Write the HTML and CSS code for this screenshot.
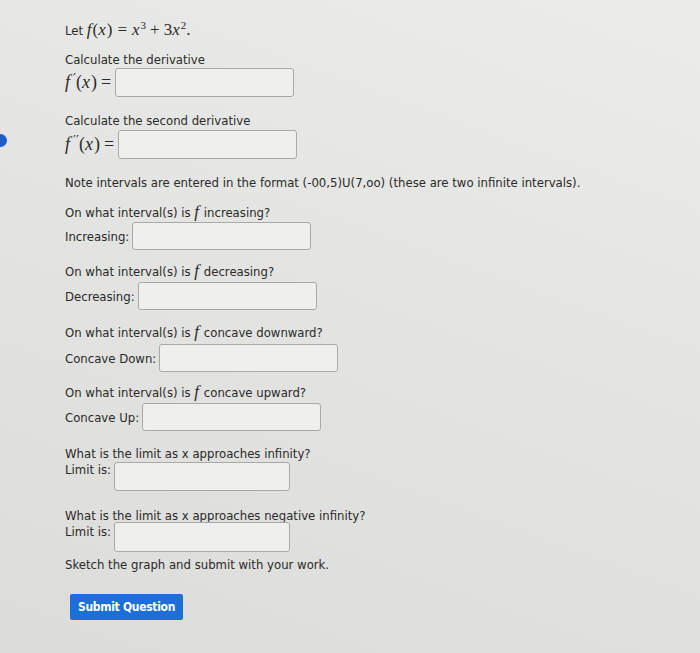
FILE: index.html
```html
<!DOCTYPE html>
<html>
<head>
<meta charset="utf-8">
<link rel="stylesheet" href="styles.css">
</head>
<body>
<span class="dot"></span>
<div class="page">
  <p class="intro">Let <span class="m"><i>f</i>(<i>x</i>)<span class="rel">=</span><i>x</i><sup>3</sup><span class="bin">+</span>3<i>x</i><sup>2</sup>.</span></p>

  <div class="block b1">
    <div class="q">Calculate the derivative</div>
    <div class="row r1"><span class="m lbl"><i>f</i><span class="pr">&#8242;</span>(<i>x</i>)<span class="rel">=</span></span><span class="box w179 h29"></span></div>
  </div>

  <div class="block b2">
    <div class="q">Calculate the second derivative</div>
    <div class="row r2"><span class="m lbl"><i>f</i><span class="pr">&#8242;&#8242;</span>(<i>x</i>)<span class="rel">=</span></span><span class="box w179 h29"></span></div>
  </div>

  <p class="note">Note intervals are entered in the format (-00,5)U(7,oo) (these are two infinite intervals).</p>

  <div class="block b3">
    <div class="q">On what interval(s) is <i class="mf">f</i> increasing?</div>
    <div class="row r3"><span class="lbl">Increasing:</span><span class="box w179"></span></div>
  </div>

  <div class="block b4">
    <div class="q">On what interval(s) is <i class="mf">f</i> decreasing?</div>
    <div class="row r4"><span class="lbl">Decreasing:</span><span class="box w179"></span></div>
  </div>

  <div class="block b5">
    <div class="q">On what interval(s) is <i class="mf">f</i> concave downward?</div>
    <div class="row r5"><span class="lbl">Concave Down:</span><span class="box w179"></span></div>
  </div>

  <div class="block b6">
    <div class="q">On what interval(s) is <i class="mf">f</i> concave upward?</div>
    <div class="row r6"><span class="lbl">Concave Up:</span><span class="box w179"></span></div>
  </div>

  <div class="block b7 lim">
    <div class="q">What is the limit as x approaches infinity?</div>
    <div class="row top"><span class="lbl">Limit is:</span><span class="box w176 h29"></span></div>
  </div>

  <div class="block b8 lim">
    <div class="q">What is the limit as x approaches negative infinity?</div>
    <div class="row top"><span class="lbl">Limit is:</span><span class="box w176 h30 up"></span></div>
  </div>

  <p class="sketch">Sketch the graph and submit with your work.</p>

  <button class="submit">Submit Question</button>
</div>
</body>
</html>
```

FILE: styles.css
```css
html, body {
  margin: 0;
  padding: 0;
}
body {
  background: linear-gradient(200deg, #ececea 0%, #e4e4e2 45%, #dcdcda 100%);
  width: 700px;
  height: 653px;
  overflow: hidden;
  position: relative;
  font-family: "DejaVu Sans Condensed", "DejaVu Sans", sans-serif;
  font-size: 13px;
  color: #2a2a2a;
}
.dot {
  position: absolute;
  left: -6px;
  top: 134px;
  width: 13px;
  height: 13px;
  border-radius: 50%;
  background: #1f5ccc;
}
.page {
  padding: 21px 0 0 65px;
}
p {
  margin: 0;
  line-height: 18px;
}
.m {
  font-family: "Liberation Serif", "DejaVu Serif", serif;
  font-size: 17px;
}
.m i, .mf {
  font-family: "Liberation Serif", "DejaVu Serif", serif;
  font-style: italic;
  font-size: 17px;
}
.m i {
  margin-right: 1px;
}
.lbl.m, .lbl.m i {
  font-size: 18px;
}
.mf {
  margin-right: 1px;
}
.m sup {
  font-size: 11px;
  line-height: 0;
  vertical-align: 0.55em;
}
.rel {
  margin: 0 5px;
}
.lbl .rel {
  margin: 0 3px 0 4px;
}
.bin {
  margin: 0 4px;
}
.pr {
  font-family: "DejaVu Sans", sans-serif;
  font-size: 13px;
  line-height: 0;
  vertical-align: 0.45em;
  margin-left: 2px;
  margin-right: 0;
  color: #2a2a2a;
}
.intro {
  margin-bottom: 11px;
}
.q {
  line-height: 18px;
}
.row {
  display: flex;
  align-items: center;
}
.row.top {
  align-items: flex-start;
}
.lim .q {
  line-height: 16px;
}
.lim .lbl {
  line-height: 16px;
}
.box.up {
  margin-top: -2px;
}
.lbl {
  margin-right: 3px;
}
.lbl.m {
  margin-right: 1px;
}
.box {
  display: inline-block;
  height: 28px;
  box-sizing: border-box;
  border: 1px solid #a9a9a7;
  border-radius: 3px;
  background: #efefed;
}
.h29 { height: 29px; }
.h30 { height: 30px; }
.w179 { width: 179px; }
.w176 { width: 176px; }

.r1 { margin-top: -1px; }
.b1 { margin-bottom: 15px; }
.r2 { margin-top: 0; }
.b2 { margin-bottom: 15px; }
.note { margin-bottom: 11px; }
.r3 { margin-top: 0; }
.b3 { margin-bottom: 12px; }
.r4 { margin-top: 1px; }
.b4 { margin-bottom: 13px; }
.r5 { margin-top: 2px; }
.b5 { margin-bottom: 11px; }
.r6 { margin-top: 1px; }
.b6 { margin-bottom: 15px; }
.b7 { margin-bottom: 17px; }
.b8 { margin-bottom: 4px; }

.sketch {
  margin-bottom: 20px;
}
.submit {
  display: block;
  font-family: "DejaVu Sans Condensed", "DejaVu Sans", sans-serif;
  font-size: 12px;
  letter-spacing: -0.3px;
  font-weight: bold;
  color: #fff;
  background: #1b6fd6;
  border: none;
  border-radius: 2px;
  width: 113px;
  height: 26px;
  padding: 0;
  margin-left: 5px;
}
```
